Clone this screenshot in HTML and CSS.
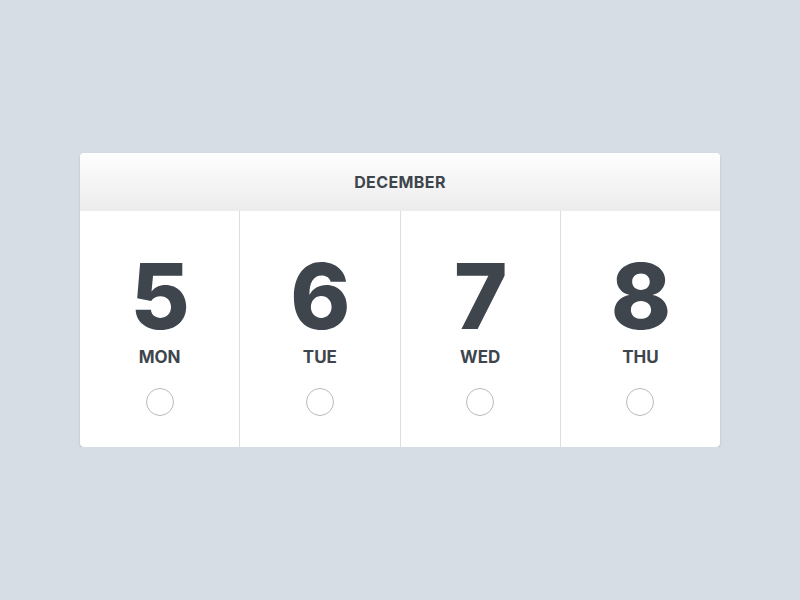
FILE: index.html
```html
<!DOCTYPE html>
<html lang="en">
<head>
	<meta charset="UTF-8">
	<title>Calendar</title>
	<link rel="stylesheet" href="styles.css">
</head>
<body>
	<div class="calendar">
		<div class="month">DECEMBER</div>
		<div class="days">
			<div class="day">
				<div class="num">5</div>
				<div class="name">MON</div>
				<span class="check"></span>
			</div>
			<div class="day">
				<div class="num">6</div>
				<div class="name">TUE</div>
				<span class="check"></span>
			</div>
			<div class="day">
				<div class="num">7</div>
				<div class="name">WED</div>
				<span class="check"></span>
			</div>
			<div class="day">
				<div class="num">8</div>
				<div class="name">THU</div>
				<span class="check"></span>
			</div>
		</div>
	</div>
</body>
</html>
```

FILE: styles.css
```css
*{
	margin: 0;
	padding: 0;
	box-sizing: border-box;
}
body{
	background-color: #d6dde5;
	font-family: Inter, Lato, sans-serif;
	color: #3e454d;
	padding-top: 153px;
}
.calendar{
	width: 640px;
	margin: 0 auto;
	background-color: #fff;
	border-radius: 4px;
	overflow: hidden;
	box-shadow: 0 1px 2px rgba(80,90,105,.35);
}
.month{
	height: 58px;
	display: flex;
	align-items: center;
	justify-content: center;
	font-size: 16px;
	font-weight: 700;
	letter-spacing: .4px;
	background: linear-gradient(#fefefe, #ececec);
}
.days{
	display: flex;
	height: 236px;
}
.day{
	flex: 1;
	display: flex;
	flex-direction: column;
	align-items: center;
	padding-top: 40px;
	border-left: 1px solid #dedede;
}
.day:first-child{
	border-left: none;
}
.num{
	font-size: 91px;
	font-weight: 800;
	line-height: 91px;
	letter-spacing: -1px;
}
.name{
	margin-top: 5px;
	font-size: 17px;
	font-weight: 700;
	line-height: 20px;
}
.check{
	margin-top: 21px;
	width: 28px;
	height: 28px;
	border: 1px solid #b9b9b9;
	border-radius: 50%;
}
```
